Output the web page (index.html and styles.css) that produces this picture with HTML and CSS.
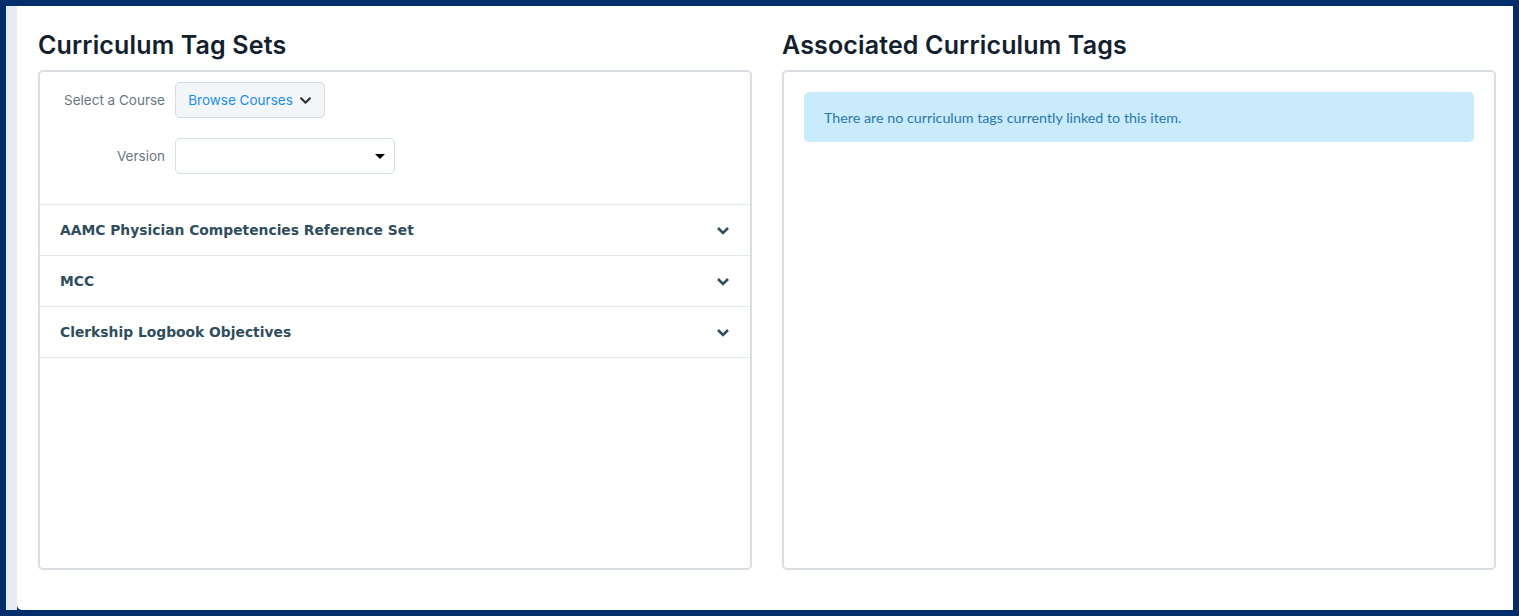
FILE: index.html
```html
<!DOCTYPE html>
<html>
	<head>
		<meta charset="utf-8" />
		<title>Curriculum Tags</title>
		<link rel="stylesheet" href="styles.css">
	</head>
	<body>
		<div class="frame">
			<div class="rail"></div>
			<div class="main">
				<div class="column">
					<h2 class="title">Curriculum Tag Sets</h2>
					<div class="panel">
						<div class="filters">
							<div class="field">
								<label class="label">Select a Course</label>
								<button class="browse" type="button">Browse Courses
									<svg class="browse-icon" viewBox="0 0 448 512" width="13" height="13"><path d="M207 381.5L12.7 187.1c-9.4-9.4-9.4-24.6 0-33.9l22.7-22.7c9.4-9.4 24.5-9.4 33.9 0L224 284.5l154.7-154c9.4-9.3 24.5-9.3 33.9 0l22.7 22.7c9.4 9.4 9.4 24.6 0 33.9L241 381.5c-9.4 9.4-24.6 9.4-34 0z"/></svg>
								</button>
							</div>
							<div class="field">
								<label class="label">Version</label>
								<div class="select"><span class="caret"></span></div>
							</div>
						</div>
						<div class="set">
							<span>AAMC Physician Competencies Reference Set</span>
							<svg class="set-icon" viewBox="0 0 14 9" width="14" height="9"><path d="M2 2l5 5 5-5"/></svg>
						</div>
						<div class="set">
							<span>MCC</span>
							<svg class="set-icon" viewBox="0 0 14 9" width="14" height="9"><path d="M2 2l5 5 5-5"/></svg>
						</div>
						<div class="set">
							<span>Clerkship Logbook Objectives</span>
							<svg class="set-icon" viewBox="0 0 14 9" width="14" height="9"><path d="M2 2l5 5 5-5"/></svg>
						</div>
					</div>
				</div>
				<div class="column">
					<h2 class="title">Associated Curriculum Tags</h2>
					<div class="panel panel-pad">
						<div class="alert">There are no curriculum tags currently linked to this item.</div>
					</div>
				</div>
			</div>
		</div>
	</body>
</html>
```

FILE: styles.css
```css
html,body{
	margin:0;
	height:100%;
}
body{
	background-color:#012d6b;
	font-family:"Inter","Open Sans",sans-serif;
}
.frame{
	box-sizing:border-box;
	height:100vh;
	padding:6px 6px 6px 6px;
	display:flex;
}
.rail{
	width:11px;
	background-color:#e8ecf1;
}
.main{
	flex:1;
	background-color:#ffffff;
	border-bottom-left-radius:5px;
	display:flex;
	gap:30px;
	padding:0 17px 0 21px;
}
.column{
	flex:1;
	display:flex;
	flex-direction:column;
}
.title{
	margin:0;
	padding-top:25px;
	height:39px;
	font-size:25px;
	font-weight:600;
	color:#13202d;
	letter-spacing:0.15px;
	line-height:28px;
}
.panel{
	height:500px;
	box-sizing:border-box;
	border:2px solid #dadee3;
	border-radius:5px;
}
.filters{
	padding:10px 0 30px 0;
	border-bottom:1px solid #e6e9ec;
	display:flex;
	flex-direction:column;
	gap:20px;
}
.field{
	display:flex;
	align-items:center;
	gap:10px;
}
.label{
	width:125px;
	text-align:right;
	font-size:13.5px;
	color:#6b7784;
}
.browse{
	height:36px;
	width:150px;
	box-sizing:border-box;
	border:1px solid #d4dbe2;
	border-radius:5px;
	background-color:#f2f6f9;
	color:#1d8fe6;
	font-family:"Inter","Open Sans",sans-serif;
	font-size:13.5px;
	display:flex;
	align-items:center;
	justify-content:center;
	gap:6px;
	padding:0;
}
.browse-icon{
	fill:#2b2b2b;
	margin-top:1px;
}
.select{
	height:36px;
	width:220px;
	box-sizing:border-box;
	border:1px solid #d6dce2;
	border-radius:5px;
	display:flex;
	align-items:center;
	justify-content:flex-end;
	padding-right:9px;
}
.caret{
	width:0;
	height:0;
	border-left:5px solid transparent;
	border-right:5px solid transparent;
	border-top:5px solid #000000;
}
.set{
	height:50px;
	border-bottom:1px solid #e6e9ec;
	display:flex;
	align-items:center;
	justify-content:space-between;
	padding:0 20px 0 20px;
	font-family:"DejaVu Sans",Verdana,sans-serif;
	font-weight:bold;
	font-size:13.85px;
	color:#2f4d5c;
}
.set-icon{
	fill:none;
	stroke:#2f4d5c;
	stroke-width:2.6;
}
.panel-pad{
	padding:20px;
}
.alert{
	height:50px;
	box-sizing:border-box;
	background-color:#c9ebfc;
	border-radius:5px;
	padding:0 20px;
	display:flex;
	align-items:center;
	font-family:"Lato","Open Sans",sans-serif;
	font-size:14.3px;
	color:#2a78a8;
}
```
